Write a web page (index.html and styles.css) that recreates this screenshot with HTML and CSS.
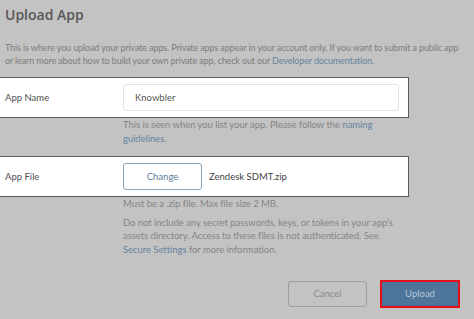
FILE: index.html
```html
<!DOCTYPE html>
<html>
<head>
<meta charset="utf-8">
<link rel="stylesheet" href="styles.css">
</head>
<body>
<div class="page">
  <h1 class="title">Upload App</h1>
  <p class="intro">This is where you upload your private apps. Private apps appear in your account only. If you want to submit a public app or learn more about how to build your own private app, check out our <span class="link">Developer documentation</span>.</p>

  <div class="field field-name">
    <div class="label">App Name</div>
    <div class="control"><div class="input">Knowbler</div></div>
  </div>
  <div class="help help-name">This is seen when you list your app. Please follow the <span class="link">naming guidelines</span>.</div>

  <div class="field field-file">
    <div class="label">App File</div>
    <div class="control file-control">
      <div class="btn-change">Change</div>
      <div class="filename">Zendesk SDMT.zip</div>
    </div>
  </div>
  <div class="help help-zip">Must be a .zip file. Max file size 2 MB.</div>
  <div class="help help-secret">Do not include any secret passwords, keys, or tokens in your app's assets directory. Access to these files is not authenticated. See <span class="link">Secure Settings</span> for more information.</div>

  <div class="actions">
    <div class="btn-cancel">Cancel</div>
    <div class="btn-upload-wrap"><div class="btn-upload">Upload</div></div>
  </div>
</div>
</body>
</html>
```

FILE: styles.css
```css
html, body {
  margin: 0;
  padding: 0;
  background: #c3c3c3;
}
body {
  width: 474px;
  height: 319px;
  overflow: hidden;
  font-family: Lato, "Noto Sans", sans-serif;
  color: #7b7b7b;
}
.page {
  display: flex;
  flex-direction: column;
}
.title {
  margin: 4px 0 0 5px;
  font-family: "Open Sans", "Noto Sans", sans-serif;
  font-size: 14px;
  line-height: 22px;
  font-weight: 600;
  color: #575757;
}
.intro {
  margin: 15px 0 0 5px;
  width: 458px;
  font-size: 9px;
  letter-spacing: -0.13px;
  line-height: 13px;
  color: #7d7d7d;
}
.link {
  color: #6583a0;
}
.field {
  display: flex;
  align-items: center;
  box-sizing: border-box;
  width: 409px;
  height: 41px;
  background: #fff;
  border: 1.5px solid #5a5a5a;
  border-left: none;
}
.field-name {
  margin-top: 10px;
}
.field-file {
  margin-top: 11px;
}
.label {
  width: 123px;
  padding-left: 5px;
  box-sizing: border-box;
  font-size: 9.5px;
  color: #4f4f4f;
  flex: none;
}
.control {
  flex: 1;
  padding-right: 9px;
}
.input {
  box-sizing: border-box;
  height: 27px;
  border: 1px solid #e2e2e2;
  border-radius: 3px;
  padding-left: 11px;
  font-size: 9.5px;
  line-height: 25px;
  color: #555;
}
.file-control {
  display: flex;
  align-items: center;
}
.btn-change {
  box-sizing: border-box;
  width: 79px;
  height: 27px;
  border: 1px solid #8aa4bb;
  border-radius: 3px;
  text-align: center;
  font-size: 9.5px;
  line-height: 25px;
  color: #5d7d9c;
}
.filename {
  margin-left: 7px;
  font-size: 9.5px;
  color: #444;
}
.help {
  margin-left: 123px;
  width: 280px;
  font-size: 9.5px;
  letter-spacing: -0.05px;
  line-height: 13.5px;
  color: #858585;
}
.help-name {
  margin-top: 0;
}
.help-zip {
  margin-top: 0;
}
.help-secret {
  margin-top: 5px;
}
.actions {
  display: flex;
  justify-content: flex-end;
  align-items: center;
  margin-top: 24px;
  padding-right: 14px;
}
.btn-cancel {
  box-sizing: border-box;
  width: 79px;
  height: 26px;
  border: 1px solid #9d9d9d;
  border-radius: 3px;
  text-align: center;
  font-size: 9.5px;
  line-height: 24px;
  color: #8a8a8a;
}
.btn-upload-wrap {
  margin-left: 13px;
  border: 2.5px solid #e10f17;
}
.btn-upload {
  width: 76px;
  height: 24px;
  background: #4d7599;
  text-align: center;
  font-size: 9.5px;
  line-height: 24px;
  color: #b6c6d6;
}
```
